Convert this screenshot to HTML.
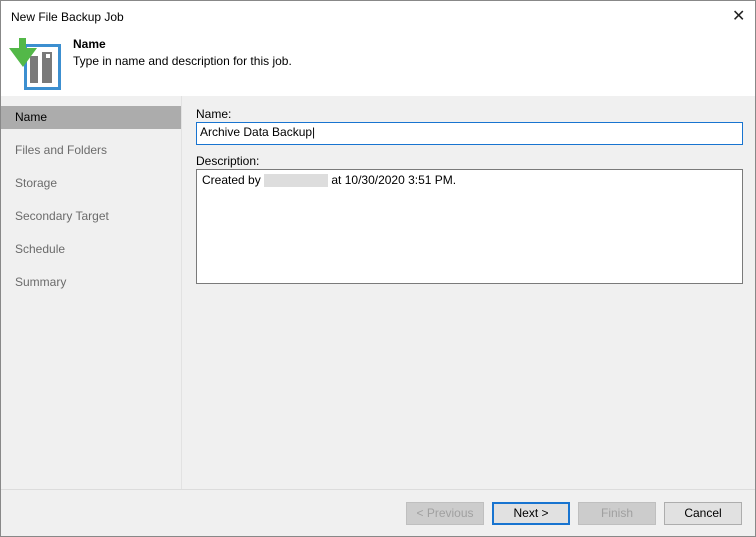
<!DOCTYPE html>
<html><head><style>
*{margin:0;padding:0;box-sizing:border-box}
body{width:756px;height:537px;overflow:hidden;font-family:"Segoe UI","Liberation Sans",sans-serif;font-size:12px;color:#000;background:#fff}
.win{position:absolute;left:0;top:0;width:756px;height:537px;border:1px solid #888;background:#f0f0f0}
.hdr{position:absolute;left:0;top:0;width:754px;height:95px;background:#fff}
.title{position:absolute;left:10px;top:9px;font-size:12px}
.close{position:absolute;left:731px;top:5px;font-size:16px;color:#222}
.h1{position:absolute;left:72px;top:36px;font-weight:bold;font-size:12px}
.h2{position:absolute;left:72px;top:53px}
.nav{position:absolute;left:0;top:95px;width:181px;height:393px;background:#f0f0f0;border-right:1px solid #e2e2e2}
.nav div{height:33px;line-height:23px;padding-left:14px;color:#6b6b6b}
.nav .sel{background:#acacac;color:#000;height:23px;margin-top:10px;margin-bottom:10px}
.nav .sel+div{margin-top:0}
.lbl{position:absolute;left:195px}
.inp{position:absolute;left:195px;width:547px;background:#fff;border:1px solid #7a7a7a}
.foot{position:absolute;left:0;top:488px;width:754px;border-top:1px solid #dcdcdc}
.btn{position:absolute;top:501px;height:23px;width:78px;border:1px solid #adadad;background:#e1e1e1;text-align:center;line-height:21px}
.dis{color:#a0a0a0;background:#cccccc;border-color:#bfbfbf}
</style></head><body><div class="win">
<div class="hdr">
<div class="title">New File Backup Job</div>
<div class="close">✕</div>
<svg style="position:absolute;left:0;top:0" width="70" height="95">
<rect x="24.5" y="44.5" width="34" height="43" fill="#fff" stroke="#3c8fd0" stroke-width="3"/>
<rect x="29" y="55" width="8" height="27" fill="#7a7a7a"/>
<rect x="41" y="51" width="10" height="31" fill="#7a7a7a"/>
<rect x="45" y="53" width="4" height="4" fill="#fff"/>
<path d="M18 37h7v10h11l-14 19l-14-19h10z" fill="#53b848"/>
</svg>
<div class="h1">Name</div>
<div class="h2">Type in name and description for this job.</div>
</div>
<div class="nav">
<div class="sel">Name</div>
<div style="margin-top:-1px;height:34px;line-height:24px">Files and Folders</div><div>Storage</div><div>Secondary Target</div><div>Schedule</div><div>Summary</div>
</div>
<div class="lbl" style="top:106px">Name:</div>
<div class="inp" style="top:121px;height:23px;border:1px solid #1874d0;padding:2px 3px">Archive Data Backup|</div>
<div class="lbl" style="top:153px">Description:</div>
<div class="inp" style="top:168px;height:115px;padding:3px 5px">Created by <span style="display:inline-block;width:64px;height:13px;background:#ddd;vertical-align:middle"></span> at 10/30/2020 3:51 PM.</div>
<div class="foot"></div>
<div class="btn dis" style="left:405px">&lt; Previous</div>
<div class="btn" style="left:491px;border:2px solid #1874d0;line-height:19px">Next &gt;</div>
<div class="btn dis" style="left:577px">Finish</div>
<div class="btn" style="left:663px">Cancel</div>
</div></body></html>
